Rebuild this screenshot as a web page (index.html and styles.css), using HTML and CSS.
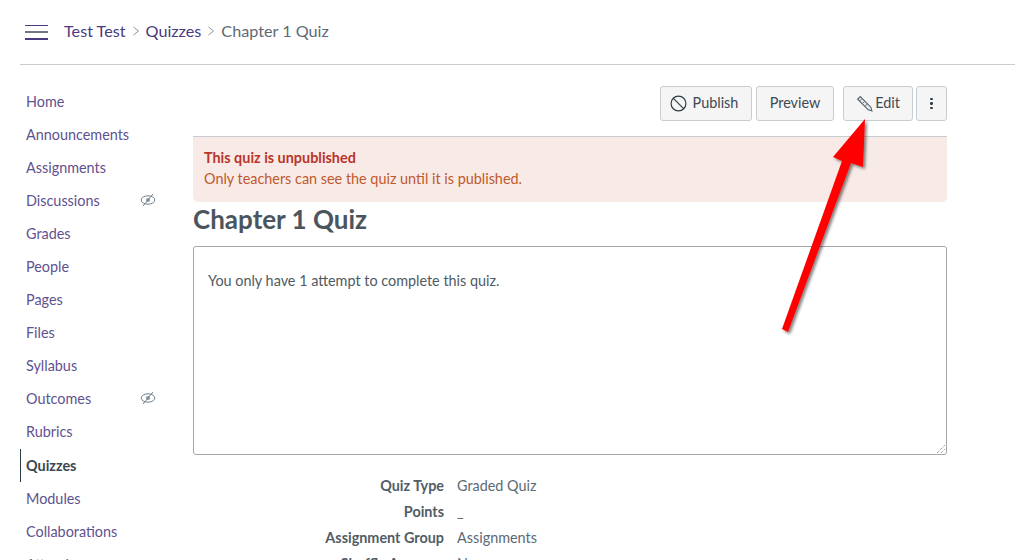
FILE: index.html
```html
<!DOCTYPE html>
<html lang="en">
<head>
    <meta charset="UTF-8">
    <title>Chapter 1 Quiz</title>
    <link rel="stylesheet" href="styles.css">
</head>
<body>
    <div class="page">
        <div class="header">
            <div class="hamburger"><span></span><span></span><span></span></div>
            <div class="crumbs">
                <a>Test Test</a>
                <svg class="crumb-sep" viewBox="0 0 8 10"><path d="M1.5 1l5 4-5 4" fill="none" stroke="#8b969e"/></svg>
                <a>Quizzes</a>
                <svg class="crumb-sep" viewBox="0 0 8 10"><path d="M1.5 1l5 4-5 4" fill="none" stroke="#8b969e"/></svg>
                <span class="crumb-current">Chapter 1 Quiz</span>
            </div>
        </div>

        <div class="main">
            <ul class="nav">
                <li>Home</li>
                <li>Announcements</li>
                <li>Assignments</li>
                <li>Discussions
                    <svg class="eye" viewBox="0 0 16 14"><ellipse cx="8" cy="7" rx="6.8" ry="4.2" fill="none" stroke="#73818c"/><circle cx="8" cy="7" r="2" fill="#8b969e"/><path d="M13 1L3 13" stroke="#73818c"/></svg>
                </li>
                <li>Grades</li>
                <li>People</li>
                <li>Pages</li>
                <li>Files</li>
                <li>Syllabus</li>
                <li>Outcomes
                    <svg class="eye" viewBox="0 0 16 14"><ellipse cx="8" cy="7" rx="6.8" ry="4.2" fill="none" stroke="#73818c"/><circle cx="8" cy="7" r="2" fill="#8b969e"/><path d="M13 1L3 13" stroke="#73818c"/></svg>
                </li>
                <li>Rubrics</li>
                <li class="active">Quizzes</li>
                <li>Modules</li>
                <li>Collaborations</li>
                <li>Attendance</li>
            </ul>

            <div class="content">
                <div class="toolbar">
                    <button class="btn btn-publish">
                        <svg class="btn-icon" viewBox="0 0 16 16"><circle cx="8" cy="8" r="7" fill="none" stroke="#2d3b45" stroke-width="1.1"/><path d="M3 3l10 10" stroke="#2d3b45" stroke-width="1.1"/></svg>
                        Publish
                    </button>
                    <button class="btn btn-preview">Preview</button>
                    <button class="btn btn-edit">
                        <svg class="btn-icon" viewBox="0 0 16 16"><path d="M1.5 4L4 1.5l10 10 1 3.5-3.5-1z" fill="#e4e6e8" stroke="#56636d"/><path d="M3.5 5.5l2-2M6 8l2-2M8.5 10.5l2-2" stroke="#56636d" stroke-width=".8"/></svg>
                        Edit
                    </button>
                    <button class="btn btn-more"><span></span><span></span><span></span></button>
                </div>

                <div class="alert">
                    <strong>This quiz is unpublished</strong>
                    <p>Only teachers can see the quiz until it is published.</p>
                </div>

                <h1>Chapter 1 Quiz</h1>

                <div class="description">
                    You only have 1 attempt to complete this quiz.
                    <svg class="resize" viewBox="0 0 10 10"><path d="M1 9l8-8M5 9l4-4" stroke="#777" stroke-dasharray="1 1"/></svg>
                </div>

                <div class="details">
                    <div class="label">Quiz Type</div><div class="value">Graded Quiz</div>
                    <div class="label">Points</div><div class="value">_</div>
                    <div class="label">Assignment Group</div><div class="value">Assignments</div>
                    <div class="label">Shuffle Answers</div><div class="value">No</div>
                </div>
            </div>
        </div>

        <!-- red annotation arrow on top of the screenshot -->
        <svg class="arrow" viewBox="0 0 100 230">
            <defs>
                <filter id="arrow-shadow" x="-20%" y="-10%" width="150%" height="120%">
                    <feDropShadow dx="2" dy="2" stdDeviation="1.5" flood-color="#000" flood-opacity="0.5"/>
                </filter>
            </defs>
            <polygon points="95,9 93,57 81,53 18,222 12,219 72,51 63,47" fill="#ff0000" filter="url(#arrow-shadow)"/>
        </svg>
    </div>
</body>
</html>
```

FILE: styles.css
```css
* {
    margin: 0;
    padding: 0;
    box-sizing: border-box;
}

html, body {
    height: 560px;
    overflow: hidden;
    background: white;
}

body {
    font-family: Lato, 'Open Sans', sans-serif;
    font-size: 14.4px;
    color: #4f5b64;
}

.page {
    position: relative;
    height: 560px;
    overflow: hidden;
    padding-left: 20px;
}

.header {
    display: flex;
    align-items: center;
    height: 65px;
    border-bottom: 1px solid #c7cdd1;
    padding-left: 5px;
}

.hamburger {
    display: flex;
    flex-direction: column;
    justify-content: space-between;
    width: 23px;
    height: 15px;
    margin-right: 16px;
}

.hamburger span {
    height: 1.5px;
    background: #4a3a80;
}

.hamburger span:nth-child(2) {
    background: #6d7883;
}

.crumbs {
    display: flex;
    align-items: center;
    padding-bottom: 4px;
    font-size: 16.2px;
    color: #4a3a80;
}

.crumb-sep {
    width: 8px;
    height: 10px;
    margin: 1px 6px 0 6px;
}

.crumb-current {
    color: #5d6a74;
}

.main {
    display: flex;
}

.nav {
    list-style: none;
    width: 173px;
    padding-top: 20px;
    flex-shrink: 0;
}

.nav li {
    display: flex;
    align-items: center;
    justify-content: space-between;
    height: 33.05px;
    padding: 0 37px 0 6px;
    color: #5f5290;
}

.nav .active {
    color: #3c4750;
    font-weight: bold;
    border-left: 1px solid #2d3b45;
    padding-left: 5px;
}

.eye {
    width: 16px;
    height: 14px;
    margin-top: -2px;
}

.content {
    width: 754px;
}

.toolbar {
    display: flex;
    justify-content: flex-end;
    height: 72px;
    padding-top: 21px;
    border-bottom: 1px solid #c7cdd1;
}

.btn {
    display: flex;
    align-items: center;
    justify-content: center;
    height: 35px;
    padding-bottom: 2px;
    font-family: inherit;
    font-size: 14.4px;
    color: #3d4a54;
    background: #f5f5f5;
    border: 1px solid #c7cdd1;
    border-radius: 3px;
}

.btn-icon {
    width: 17px;
    height: 17px;
    margin-top: 2px;
}

.btn-publish {
    width: 92px;
    gap: 6px;
    padding-right: 4px;
}

.btn-preview {
    width: 78px;
    margin-left: 4px;
}

.btn-edit {
    width: 70px;
    margin-left: 9px;
    gap: 2px;
}

.btn-more {
    flex-direction: column;
    gap: 2px;
    width: 31px;
    margin-left: 3px;
    padding-bottom: 0;
}

.btn-more span {
    width: 2.5px;
    height: 2.5px;
    border-radius: 50%;
    background: #2d3b45;
}

.alert {
    height: 65px;
    padding: 10px 11px;
    line-height: 21px;
    background: #f8eae7;
    border-radius: 0 0 5px 5px;
    color: #bf5a2c;
}

.alert strong {
    color: #b9352a;
}

h1 {
    font-size: 26px;
    line-height: 34px;
    height: 36px;
    color: #4b555d;
}

.description {
    position: relative;
    height: 209px;
    margin-top: 8px;
    padding: 23px 14px;
    line-height: 21px;
    border: 1px solid #a5a5a5;
    border-radius: 3px;
}

.resize {
    position: absolute;
    right: 0;
    bottom: 0;
    width: 10px;
    height: 10px;
}

.details {
    display: grid;
    grid-template-columns: 251px 1fr;
    column-gap: 13px;
    grid-auto-rows: 26px;
    margin-top: 18px;
    line-height: 26px;
}

.label {
    text-align: right;
    font-weight: bold;
    color: #525c65;
}

.value {
    color: #5d6a74;
}

.arrow {
    position: absolute;
    left: 770px;
    top: 110px;
    width: 100px;
    height: 230px;
    overflow: visible;
    pointer-events: none;
}
```
